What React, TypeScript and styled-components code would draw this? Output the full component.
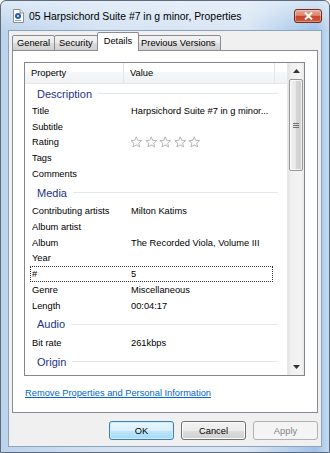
import styled, { createGlobalStyle } from "styled-components";

const GlobalStyle = createGlobalStyle`
  html, body {
    margin: 0;
    padding: 0;
    background: #ffffff;
  }
  body {
    font-family: "Liberation Sans", Arial, sans-serif;
    font-size: 9.3px;
    color: #000;
  }
`;

const Window = styled.div`
  width: 330px;
  height: 453px;
  box-sizing: border-box;
  border: 1px solid #5d6b7c;
  border-radius: 6px 6px 0 0;
  padding: 0 7px 5px;
  display: flex;
  flex-direction: column;
  background:
    linear-gradient(to bottom, rgba(236, 243, 250, 0.7) 0px, rgba(236, 243, 250, 0) 30px),
    linear-gradient(to right, #bcd3ec 0%, #d3e2f3 30%, #dae6f4 75%, #9fc2e8 96%, #c4d9ef 100%);
`;

const TitleBar = styled.div`
  height: 29px;
  display: flex;
  align-items: center;
  flex-shrink: 0;
`;

const TitleIcon = styled.svg`
  width: 12px;
  height: 14px;
  margin: 0 5px 0 4px;
  flex-shrink: 0;
`;

const TitleText = styled.div`
  flex: 1;
  font-size: 10.4px;
  color: #000;
  white-space: nowrap;
  margin-top: 1px;
`;

const CloseButton = styled.div`
  width: 28px;
  height: 14px;
  box-sizing: border-box;
  border: 1px solid #6d2a1f;
  border-radius: 3px;
  background: linear-gradient(to bottom, #eaa797 0%, #dc8670 45%, #c8452c 52%, #d0583b 100%);
  box-shadow: inset 0 0 0 1px rgba(255, 255, 255, 0.35);
  display: flex;
  align-items: center;
  justify-content: center;
  margin-top: 1px;
`;

const Client = styled.div`
  flex: 1;
  display: flex;
  flex-direction: column;
  background: #f0f0f0;
  border: 1px solid #8da2bb;
  padding: 1px 3px 0;
`;

const TabRow = styled.div`
  display: flex;
  align-items: flex-end;
  height: 19px;
  margin-bottom: -1px;
  position: relative;
  z-index: 1;
`;

const Tab = styled.div<{ $active?: boolean }>`
  box-sizing: border-box;
  height: ${(p) => (p.$active ? "19px" : "16px")};
  padding: ${(p) => (p.$active ? "2px 6px 0" : "1px 4px 0")};
  margin: ${(p) => (p.$active ? "0 -2px 0 -1px" : "0 0 0 -1px")};
  border: 1px solid #898c95;
  border-bottom: ${(p) => (p.$active ? "none" : "1px solid #898c95")};
  border-radius: 2px 2px 0 0;
  background: ${(p) =>
    p.$active ? "#ffffff" : "linear-gradient(to bottom, #f3f3f3 0%, #ebebeb 50%, #dddddd 51%, #cfcfcf 100%)"};
  position: relative;
  z-index: ${(p) => (p.$active ? 2 : 1)};
  white-space: nowrap;
  line-height: 13px;

  &:first-child {
    margin-left: 0;
  }
`;

const Panel = styled.div`
  height: 363px;
  box-sizing: border-box;
  background: #ffffff;
  border: 1px solid #898c95;
  padding: 11px 12px 0 11px;
  display: flex;
  flex-direction: column;
`;

const ListView = styled.div`
  height: 314px;
  box-sizing: border-box;
  border: 1px solid #828790;
  display: flex;
  overflow: hidden;
  flex-shrink: 0;
`;

const ListContent = styled.div`
  flex: 1;
  overflow: hidden;
`;

const Header = styled.div`
  height: 21px;
  display: flex;
  background: linear-gradient(to bottom, #ffffff 0%, #ffffff 45%, #f6f7f8 46%, #f1f2f3 100%);
  border-bottom: 1px solid #e6e7e9;
  box-sizing: border-box;
`;

const HeaderCell = styled.div<{ $w?: number }>`
  ${(p) => (p.$w ? `width: ${p.$w}px;` : "flex: 1;")}
  box-sizing: border-box;
  padding-left: 6px;
  display: flex;
  align-items: center;
  border-right: 1px solid #e3e5e8;

  &:last-child {
    border-right: none;
  }
`;

const GroupRow = styled.div<{ $first?: boolean }>`
  height: ${(p) => (p.$first ? "19px" : "21.5px")};
  display: flex;
  align-items: center;
  padding: 0 9px 0 12px;
  color: #1e3287;
  font-size: 11px;
`;

const GroupLine = styled.div`
  flex: 1;
  height: 1px;
  background: #e2e8f0;
  margin-left: 6px;
`;

const Row = styled.div<{ $focus?: boolean }>`
  height: 15.75px;
  margin-left: 5px;
  width: 243px;
  box-sizing: border-box;
  display: grid;
  grid-template-columns: 99px 1fr;
  align-items: center;
  padding-left: 1px;
  border: 1px dotted ${(p) => (p.$focus ? "#333" : "transparent")};
  white-space: nowrap;
`;

const Cell = styled.div`
  overflow: hidden;
`;

const Stars = styled.div`
  display: flex;
  gap: 2px;
  margin-left: -1px;
`;

const ScrollBar = styled.div`
  width: 16px;
  flex-shrink: 0;
  display: flex;
  flex-direction: column;
  background: linear-gradient(to right, #e3e3e3 0%, #f0f0f0 20%, #f4f4f4 80%, #e8e8e8 100%);
  border-left: 1px solid #e8e8e8;
`;

const ArrowBtn = styled.div`
  height: 16px;
  display: flex;
  align-items: center;
  justify-content: center;
  flex-shrink: 0;
`;

const Track = styled.div`
  flex: 1;
  padding: 0 1px;
`;

const Thumb = styled.div`
  height: 92px;
  box-sizing: border-box;
  border: 1px solid #979797;
  border-radius: 2px;
  background: linear-gradient(to right, #f3f3f3 0%, #e6e6e6 50%, #d6d6d6 51%, #cfcfcf 100%);
  box-shadow: inset 0 0 0 1px rgba(255, 255, 255, 0.7);
  display: flex;
  align-items: center;
  justify-content: center;
`;

const Grip = styled.div`
  width: 6px;
  height: 5px;
  background: repeating-linear-gradient(to bottom, #6f6f6f 0px, #6f6f6f 1px, transparent 1px, transparent 2px);
`;

const Link = styled.a`
  align-self: flex-start;
  color: #0066cc;
  text-decoration: underline;
  margin: 11px 0 0 1px;
  line-height: 12px;
  cursor: pointer;
`;

const ButtonRow = styled.div`
  display: flex;
  justify-content: flex-end;
  gap: 7px;
  margin-top: 8px;
`;

const Button = styled.div<{ $variant?: "default" | "normal" | "disabled" }>`
  width: 65px;
  height: 19px;
  box-sizing: border-box;
  border-radius: 3px;
  display: flex;
  align-items: center;
  justify-content: center;
  border: 1px solid
    ${(p) => (p.$variant === "default" ? "#3c7fb1" : p.$variant === "disabled" ? "#adb2b5" : "#707070")};
  background: ${(p) =>
    p.$variant === "default"
      ? "linear-gradient(to bottom, #eaf6fd 0%, #d9f0fc 50%, #bee6fd 51%, #a7d9f5 100%)"
      : p.$variant === "disabled"
      ? "#f4f4f4"
      : "linear-gradient(to bottom, #f2f2f2 0%, #ebebeb 50%, #dddddd 51%, #cfcfcf 100%)"};
  box-shadow: ${(p) =>
    p.$variant === "default" ? "inset 0 0 0 1px #d0ecfb" : p.$variant === "disabled" ? "none" : "inset 0 0 0 1px #fcfcfc"};
  color: ${(p) => (p.$variant === "disabled" ? "#838383" : "#000")};
`;

const Star = () => (
  <svg width="12.5" height="12" viewBox="0 0 24 23">
    <path
      d="M12 1.5 L14.9 8.3 L22.3 8.9 L16.7 13.8 L18.4 21 L12 17.2 L5.6 21 L7.3 13.8 L1.7 8.9 L9.1 8.3 Z"
      fill="#fbfbfb"
      stroke="#a9a9a9"
      strokeWidth="1.6"
      strokeLinejoin="round"
    />
  </svg>
);

type Item = { label: string; value?: string; stars?: boolean; focus?: boolean };

const groups: { name: string; items: Item[] }[] = [
  {
    name: "Description",
    items: [
      { label: "Title", value: "Harpsichord Suite #7 in g minor..." },
      { label: "Subtitle" },
      { label: "Rating", stars: true },
      { label: "Tags" },
      { label: "Comments" },
    ],
  },
  {
    name: "Media",
    items: [
      { label: "Contributing artists", value: "Milton Katims" },
      { label: "Album artist" },
      { label: "Album", value: "The Recorded Viola, Volume III" },
      { label: "Year" },
      { label: "#", value: "5", focus: true },
      { label: "Genre", value: "Miscellaneous" },
      { label: "Length", value: "00:04:17" },
    ],
  },
  { name: "Audio", items: [{ label: "Bit rate", value: "261kbps" }] },
  { name: "Origin", items: [] },
];

export default function App() {
  return (
    <>
      <GlobalStyle />
      <Window>
        <TitleBar>
          <TitleIcon viewBox="0 0 12 14">
            <path d="M1.5 0.5 H8 L11.5 4 V13.5 H1.5 Z" fill="#ffffff" stroke="#8a8f96" />
            <path d="M8 0.5 V4 H11.5" fill="#e6e9ee" stroke="#8a8f96" />
            <circle cx="6" cy="7" r="3" fill="#2b5e9e" />
            <circle cx="6" cy="7" r="1.1" fill="#cfe2f6" />
            <rect x="3" y="11" width="6" height="1" fill="#9aa4b0" />
          </TitleIcon>
          <TitleText>05 Harpsichord Suite #7 in g minor, Properties</TitleText>
          <CloseButton>
            <svg width="9" height="8" viewBox="0 0 9 8">
              <path d="M1 0.5 L8 7.5 M8 0.5 L1 7.5" stroke="#ffffff" strokeWidth="2" />
            </svg>
          </CloseButton>
        </TitleBar>
        <Client>
          <TabRow>
            <Tab>General</Tab>
            <Tab>Security</Tab>
            <Tab $active>Details</Tab>
            <Tab>Previous Versions</Tab>
          </TabRow>
          <Panel>
            <ListView>
              <ListContent>
                <Header>
                  <HeaderCell $w={99}>Property</HeaderCell>
                  <HeaderCell $w={151}>Value</HeaderCell>
                  <HeaderCell />
                </Header>
                {groups.map((g, gi) => (
                  <div key={g.name}>
                    <GroupRow $first={gi === 0}>
                      {g.name}
                      <GroupLine />
                    </GroupRow>
                    {g.items.map((it) => (
                      <Row key={it.label} $focus={it.focus}>
                        <Cell>{it.label}</Cell>
                        <Cell>
                          {it.stars ? (
                            <Stars>
                              {[0, 1, 2, 3, 4].map((i) => (
                                <Star key={i} />
                              ))}
                            </Stars>
                          ) : (
                            it.value
                          )}
                        </Cell>
                      </Row>
                    ))}
                  </div>
                ))}
              </ListContent>
              <ScrollBar>
                <ArrowBtn>
                  <svg width="7" height="4" viewBox="0 0 7 4">
                    <path d="M0 4 L3.5 0 L7 4 Z" fill="#333" />
                  </svg>
                </ArrowBtn>
                <Track>
                  <Thumb>
                    <Grip />
                  </Thumb>
                </Track>
                <ArrowBtn>
                  <svg width="7" height="4" viewBox="0 0 7 4">
                    <path d="M0 0 L3.5 4 L7 0 Z" fill="#333" />
                  </svg>
                </ArrowBtn>
              </ScrollBar>
            </ListView>
            <Link>Remove Properties and Personal Information</Link>
          </Panel>
          <ButtonRow>
            <Button $variant="default">OK</Button>
            <Button>Cancel</Button>
            <Button $variant="disabled">Apply</Button>
          </ButtonRow>
        </Client>
      </Window>
    </>
  );
}
